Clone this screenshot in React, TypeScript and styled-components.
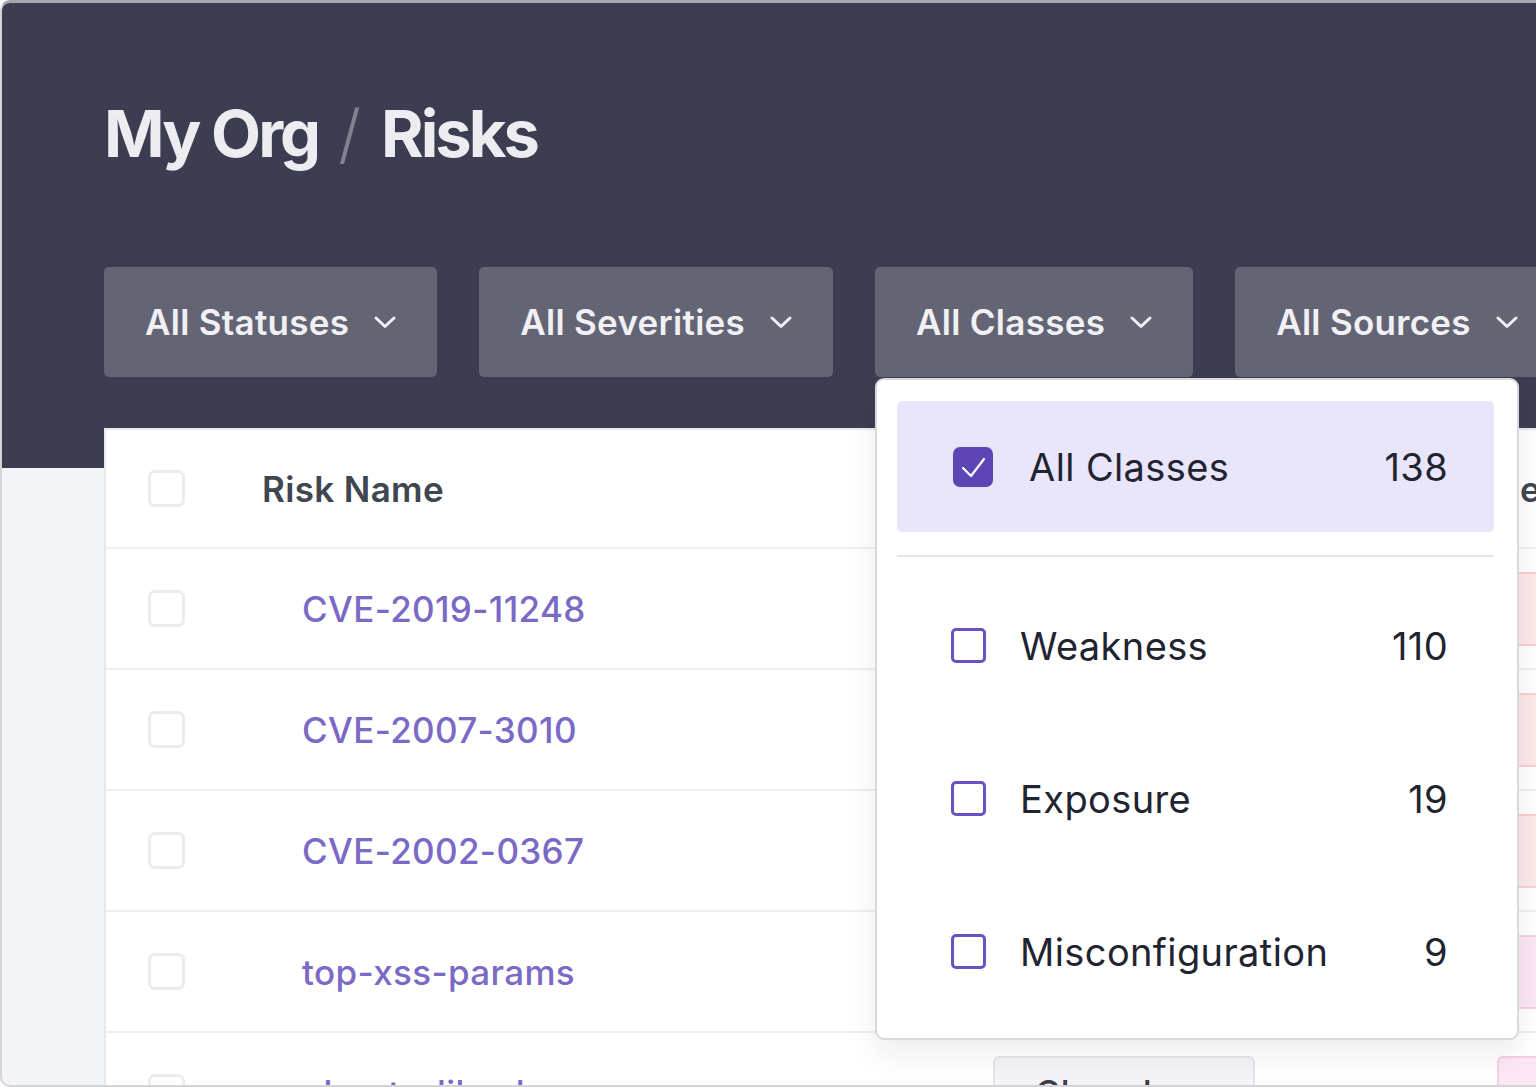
import React from "react";
import styled, { createGlobalStyle } from "styled-components";

const GlobalStyle = createGlobalStyle`
  html, body {
    margin: 0;
    padding: 0;
    background: #ffffff;
    overflow: hidden;
  }
  body {
    font-family: Inter, "Noto Sans", sans-serif;
  }
  * {
    box-sizing: border-box;
  }
`;

const Frame = styled.div`
  position: relative;
  width: 1536px;
  height: 1087px;
  overflow: hidden;
  background: #f3f4f6;
  border: 2px solid #d3d4d8;
  border-top: 3px solid #a5a7ad;
  border-right: none;
  border-radius: 10px 0 0 10px;
`;

const Header = styled.header`
  background: #3d3d52;
  padding: 91px 0 91px 102px;
`;

const Title = styled.h1`
  margin: 0;
  display: flex;
  align-items: center;
  font-size: 65px;
  line-height: 80px;
  font-weight: 700;
  letter-spacing: -0.045em;
  color: #ececf1;
`;

const Slash = styled.span`
  margin: 0 20px 0 20px;
  font-weight: 300;
  letter-spacing: 0;
  color: #80838f;
`;

const FilterRow = styled.div`
  display: flex;
  gap: 42px;
  margin-top: 93px;
`;

const FilterSlot = styled.div`
  position: relative;
  flex-shrink: 0;
`;

const FilterButton = styled.button`
  display: flex;
  align-items: center;
  gap: 25px;
  height: 110px;
  padding: 0 41px;
  background: #636474;
  border: none;
  border-radius: 5px;
  color: #f1f1f5;
  font-family: inherit;
  font-size: 35px;
  font-weight: 600;
  letter-spacing: 0.008em;
  white-space: nowrap;
`;

const Card = styled.div`
  margin: -40px 0 0 102px;
  width: 1600px;
  background: #ffffff;
  border: 2px solid #e8e8eb;
  border-right: none;
`;

const Row = styled.div<{ $head?: boolean }>`
  display: grid;
  grid-template-columns: 156px 731px 504px 1fr;
  align-items: center;
  height: ${(p) => (p.$head ? "119px" : "121px")};
  border-bottom: 2px solid #efeff1;
`;

const CheckCell = styled.div`
  padding-left: 42px;
`;

const RowCheck = styled.span`
  display: block;
  width: 37px;
  height: 37px;
  border: 3px solid #ececee;
  border-radius: 7px;
  background: #ffffff;
`;

const HeadLabel = styled.div`
  font-size: 35px;
  font-weight: 600;
  letter-spacing: 0.01em;
  color: #40464f;
  white-space: nowrap;
`;

const RiskLink = styled.a`
  padding-left: 40px;
  font-size: 35px;
  font-weight: 500;
  letter-spacing: 0.01em;
  color: #7b69c6;
  text-decoration: none;
  white-space: nowrap;
`;

const StatusPill = styled.span`
  display: inline-flex;
  align-items: center;
  width: 262px;
  height: 74px;
  padding-left: 40px;
  background: #f4f4f6;
  border: 2px solid #e5e5e9;
  border-radius: 6px;
  font-size: 35px;
  font-weight: 500;
  color: #3a3e46;
`;

const SeverityPill = styled.span<{ $tone: "red" | "pink" }>`
  display: inline-flex;
  align-items: center;
  width: 220px;
  height: 74px;
  padding-left: 40px;
  background: ${(p) => (p.$tone === "red" ? "#fde9ea" : "#fce8f4")};
  border: 2px solid ${(p) => (p.$tone === "red" ? "#f8cfd2" : "#f5d0e5")};
  border-radius: 6px;
  font-size: 35px;
  font-weight: 500;
  color: #b42335;
`;

const Menu = styled.div`
  position: absolute;
  top: calc(100% + 1px);
  left: 0;
  width: 644px;
  height: 662px;
  padding: 21px 23px 0 20px;
  background: #ffffff;
  border: 2px solid #d8d9dd;
  border-radius: 9px;
  box-shadow: 0 14px 30px rgba(20, 20, 40, 0.08);
  z-index: 10;
`;

const AllOption = styled.div`
  display: flex;
  align-items: center;
  gap: 36px;
  height: 131px;
  padding: 0 46px 0 56px;
  background: #e9e5fb;
  border-radius: 5px;
`;

const Divider = styled.div`
  height: 2px;
  margin-top: 23px;
  background: #e6e6e9;
`;

const OptionList = styled.div`
  padding-top: 12px;
`;

const Option = styled.div`
  display: flex;
  align-items: center;
  gap: 34px;
  height: 153px;
  padding: 0 46px 0 54px;
`;

const Box = styled.span<{ $checked?: boolean }>`
  display: flex;
  align-items: center;
  justify-content: center;
  flex-shrink: 0;
  width: ${(p) => (p.$checked ? "40px" : "35px")};
  height: ${(p) => (p.$checked ? "40px" : "35px")};
  border-radius: ${(p) => (p.$checked ? "7px" : "5px")};
  background: ${(p) => (p.$checked ? "#5e45b5" : "#ffffff")};
  border: ${(p) => (p.$checked ? "none" : "3px solid #6a52c2")};
`;

const OptionLabel = styled.span`
  flex: 1;
  font-size: 38px;
  font-weight: 400;
  letter-spacing: 0.01em;
  color: #1f2430;
  white-space: nowrap;
`;

const OptionCount = styled.span`
  font-size: 38px;
  font-weight: 400;
  letter-spacing: 0.01em;
  color: #1f2430;
`;

const Chevron = () => (
  <svg width="22" height="14" viewBox="0 0 22 14" fill="none">
    <polyline
      points="2,3 11,11.5 20,3"
      stroke="#f1f1f5"
      strokeWidth="3"
      strokeLinecap="round"
      strokeLinejoin="round"
    />
  </svg>
);

const CheckMark = () => (
  <svg width="40" height="40" viewBox="0 0 40 40" fill="none">
    <polyline
      points="10,21 18,29 31,12"
      stroke="#ffffff"
      strokeWidth="2.2"
      strokeLinecap="round"
      strokeLinejoin="round"
    />
  </svg>
);

const filters = ["All Statuses", "All Severities", "All Classes", "All Sources"];

const classes = [
  { label: "Weakness", count: 110 },
  { label: "Exposure", count: 19 },
  { label: "Misconfiguration", count: 9 },
];

const risks: { name: string; status: string; severity: string; tone: "red" | "pink" }[] = [
  { name: "CVE-2019-11248", status: "Open", severity: "High", tone: "red" },
  { name: "CVE-2007-3010", status: "Open", severity: "High", tone: "red" },
  { name: "CVE-2002-0367", status: "Open", severity: "High", tone: "red" },
  { name: "top-xss-params", status: "Open", severity: "Medium", tone: "pink" },
  { name: "ubuntu-libssl", status: "Closed", severity: "Medium", tone: "pink" },
];

const ClassMenu = () => (
  <Menu>
    <AllOption>
      <Box $checked>
        <CheckMark />
      </Box>
      <OptionLabel>All Classes</OptionLabel>
      <OptionCount>138</OptionCount>
    </AllOption>
    <Divider />
    <OptionList>
      {classes.map((c) => (
        <Option key={c.label}>
          <Box />
          <OptionLabel>{c.label}</OptionLabel>
          <OptionCount>{c.count}</OptionCount>
        </Option>
      ))}
    </OptionList>
  </Menu>
);

const App = () => {
  return (
    <>
      <GlobalStyle />
      <Frame>
        <Header>
          <Title>
            My Org<Slash>/</Slash>Risks
          </Title>
          <FilterRow>
            {filters.map((f) => (
              <FilterSlot key={f}>
                <FilterButton>
                  {f}
                  <Chevron />
                </FilterButton>
                {f === "All Classes" && <ClassMenu />}
              </FilterSlot>
            ))}
          </FilterRow>
        </Header>
        <Card>
          <Row $head>
            <CheckCell>
              <RowCheck />
            </CheckCell>
            <HeadLabel>Risk Name</HeadLabel>
            <HeadLabel>Status</HeadLabel>
            <HeadLabel>Severity</HeadLabel>
          </Row>
          {risks.map((r) => (
            <Row key={r.name}>
              <CheckCell>
                <RowCheck />
              </CheckCell>
              <div>
                <RiskLink href="#">{r.name}</RiskLink>
              </div>
              <div>
                <StatusPill>{r.status}</StatusPill>
              </div>
              <div>
                <SeverityPill $tone={r.tone}>{r.severity}</SeverityPill>
              </div>
            </Row>
          ))}
        </Card>
      </Frame>
    </>
  );
};

export default App;
